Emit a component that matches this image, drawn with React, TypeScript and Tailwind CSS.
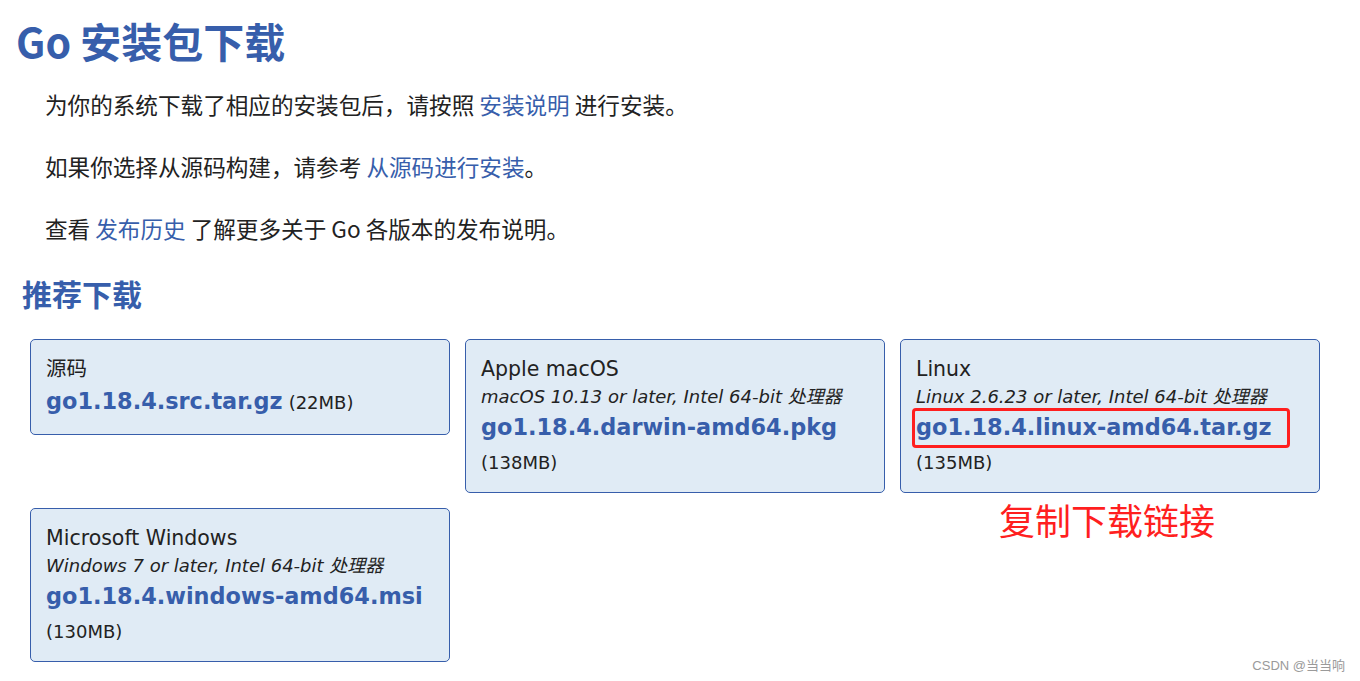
const sans = 'font-["Noto_Sans_CJK_SC","Noto_Sans",sans-serif]'

type Download = {
  os: string
  req?: string
  file: string
  size: string
  inline?: boolean
  marked?: boolean
}

const downloads: Download[] = [
  { os: '源码', file: 'go1.18.4.src.tar.gz', size: '(22MB)', inline: true },
  {
    os: 'Apple macOS',
    req: 'macOS 10.13 or later, Intel 64-bit 处理器',
    file: 'go1.18.4.darwin-amd64.pkg',
    size: '(138MB)',
  },
  {
    os: 'Linux',
    req: 'Linux 2.6.23 or later, Intel 64-bit 处理器',
    file: 'go1.18.4.linux-amd64.tar.gz',
    size: '(135MB)',
    marked: true,
  },
  {
    os: 'Microsoft Windows',
    req: 'Windows 7 or later, Intel 64-bit 处理器',
    file: 'go1.18.4.windows-amd64.msi',
    size: '(130MB)',
  },
]

function DownloadBox({ d }: { d: Download }) {
  return (
    <div className="relative w-[420px]">
      <div className='rounded-[5px] border border-[#375eab] bg-[#e0ebf5] px-[15px] pb-[15px] pt-[15px] text-[#222] font-["DejaVu_Sans","Noto_Sans_CJK_SC",sans-serif]'>
        <div className="h-[28px] text-[20.5px] leading-[28px]">{d.os}</div>
        {d.req && <div className="h-[28px] text-[18px] italic leading-[28px]">{d.req}</div>}
        <div className={d.inline ? 'relative h-[36px] leading-[36px]' : 'relative h-[32px] leading-[32px]'}>
          <a href="#" className="text-[22.4px] font-bold text-[#375eab]">
            {d.file}
          </a>
          {d.inline && <span className="ml-[6px] text-[18px]">{d.size}</span>}
          {d.marked && (
            <span className="absolute left-[-4px] top-[-3px] h-[40px] w-[378px] rounded-[4px] border-[3px] border-[#ff1f1f]" />
          )}
        </div>
        {!d.inline && <div className="mt-[6px] h-[28px] text-[18px] leading-[28px]">{d.size}</div>}
      </div>
      {d.marked && (
        <div className="absolute left-[99px] top-full mt-[6px] text-[36px] leading-[40px] text-[#ff1f1f] font-['Noto_Sans_CJK_SC',sans-serif]">
          复制下载链接
        </div>
      )}
    </div>
  )
}

export default function App() {
  return (
    <div className={`relative h-[681px] w-[1360px] overflow-hidden bg-white text-[#222] ${sans}`}>
      <h1 className="pl-4 pt-4 text-[41px] font-bold leading-[48px] text-[#375eab]">Go 安装包下载</h1>

      <div className="pl-[45px] text-[22.6px] leading-[32px]">
        <p className="mt-[25px]">
          为你的系统下载了相应的安装包后，请按照 <a href="#" className="text-[#375eab]">安装说明</a> 进行安装。
        </p>
        <p className="mt-[30px]">
          如果你选择从源码构建，请参考 <a href="#" className="text-[#375eab]">从源码进行安装</a>。
        </p>
        <p className="mt-[30px]">
          查看 <a href="#" className="text-[#375eab]">发布历史</a> 了解更多关于 Go 各版本的发布说明。
        </p>
      </div>

      <h2 className="mt-[28px] pl-[22px] text-[30px] font-bold leading-[40px] text-[#375eab]">推荐下载</h2>

      <div className="mt-[26px] flex w-[1320px] flex-wrap items-start gap-[15px] pl-[30px]">
        {downloads.map((d) => (
          <DownloadBox key={d.file} d={d} />
        ))}
      </div>

      <div className="absolute bottom-[6px] right-[15px] text-[13px] text-[#9a9a9a] font-['Liberation_Sans','Noto_Sans_CJK_SC',sans-serif]">
        CSDN @当当响
      </div>
    </div>
  )
}
